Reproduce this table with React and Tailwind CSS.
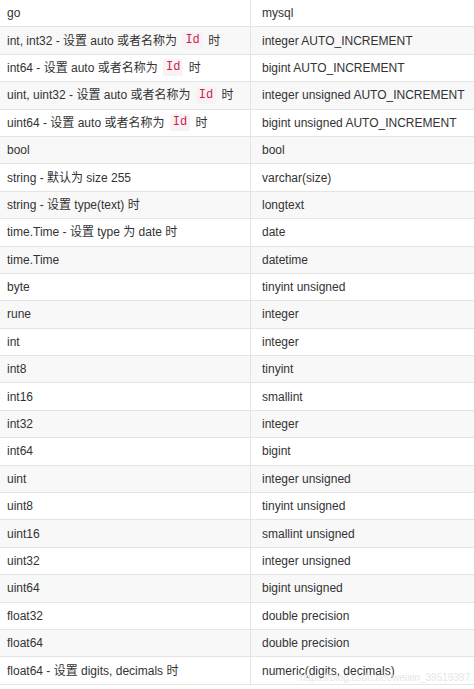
const rows = [
  ['go', 'mysql'],
  [['int, int32 - 设置 auto 或者名称为 ', 'Id', ' 时'], 'integer AUTO_INCREMENT'],
  [['int64 - 设置 auto 或者名称为 ', 'Id', ' 时'], 'bigint AUTO_INCREMENT'],
  [['uint, uint32 - 设置 auto 或者名称为 ', 'Id', ' 时'], 'integer unsigned AUTO_INCREMENT'],
  [['uint64 - 设置 auto 或者名称为 ', 'Id', ' 时'], 'bigint unsigned AUTO_INCREMENT'],
  ['bool', 'bool'],
  ['string - 默认为 size 255', 'varchar(size)'],
  ['string - 设置 type(text) 时', 'longtext'],
  ['time.Time - 设置 type 为 date 时', 'date'],
  ['time.Time', 'datetime'],
  ['byte', 'tinyint unsigned'],
  ['rune', 'integer'],
  ['int', 'integer'],
  ['int8', 'tinyint'],
  ['int16', 'smallint'],
  ['int32', 'integer'],
  ['int64', 'bigint'],
  ['uint', 'integer unsigned'],
  ['uint8', 'tinyint unsigned'],
  ['uint16', 'smallint unsigned'],
  ['uint32', 'integer unsigned'],
  ['uint64', 'bigint unsigned'],
  ['float32', 'double precision'],
  ['float64', 'double precision'],
  ['float64 - 设置 digits, decimals 时', 'numeric(digits, decimals)'],
];

function GoCell({ value }) {
  if (typeof value === 'string') return <span>{value}</span>;
  const [before, code, after] = value;
  return (
    <span className="flex items-center whitespace-pre">
      {before}
      <code className="mx-[2px] rounded-[2px] bg-[#f9f2f4] px-[3px] font-['Liberation_Mono',monospace] text-[12px] leading-[17px] text-[#c7254e]">
        {code}
      </code>
      {after}
    </span>
  );
}

export default function App() {
  return (
    <div className="relative h-[689px] w-[474px] overflow-hidden bg-white font-['Liberation_Sans','Noto_Sans_CJK_SC',sans-serif] text-[12px] text-[#333]">
      {rows.map(([go, sql], i) => (
        <div
          key={i}
          className={`flex h-[27.4px] items-center border-b border-[#e4e4e4] ${
            i % 2 === 1 ? 'bg-[#f8f8f8]' : 'bg-white'
          }`}
        >
          <div className="flex h-full w-[251px] shrink-0 items-center border-r border-[#e4e4e4] pl-[7px]">
            <GoCell value={go} />
          </div>
          <div className="flex h-full items-center whitespace-nowrap pl-[11px]">{sql}</div>
        </div>
      ))}
      <span className="absolute bottom-[4px] right-[4px] text-[10px] text-[#e6e6e6]">
        https://blog.csdn.net/weixin_39519397
      </span>
    </div>
  );
}
